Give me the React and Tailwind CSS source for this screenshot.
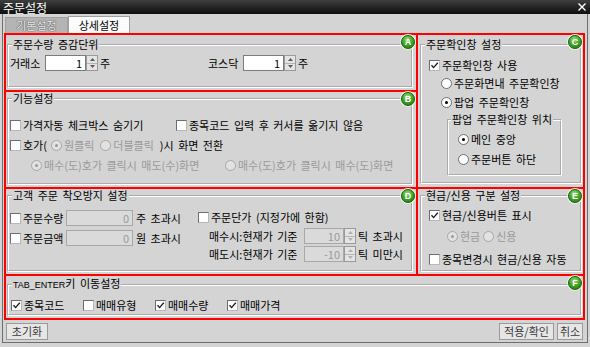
import React from "react";

function Badge({ letter }) {
  return (
    <span className="absolute right-[1px] top-0 z-10 flex h-[14px] w-[14px] items-center justify-center rounded-full border border-[#1f5e12] bg-[radial-gradient(circle_at_45%_30%,#9ee07a,#45a82a_45%,#20700f)] font-['Liberation_Sans',sans-serif] text-[9px] font-bold leading-none text-white shadow-[0_0_0_1px_#e8f3e0] [word-spacing:0]">
      {letter}
    </span>
  );
}

function Check({ checked }) {
  return (
    <span className="flex h-[11px] w-[11px] shrink-0 items-center justify-center border border-t-[#6e6e6e] border-l-[#6e6e6e] border-b-[#b8b8b8] border-r-[#b8b8b8] bg-white">
      {checked && (
        <svg viewBox="0 0 9 9" className="h-[9px] w-[9px]">
          <path d="M1.5 4.2L3.6 6.6L7.8 1.8" fill="none" stroke="#1a1a1a" strokeWidth="1.3" />
        </svg>
      )}
    </span>
  );
}

function Radio({ checked, disabled }) {
  return (
    <span
      className={`flex h-[11px] w-[11px] shrink-0 items-center justify-center rounded-full border ${
        disabled ? "border-[#a6a6a6] bg-[#e2e2e2]" : "border-[#6e6e6e] bg-white"
      }`}
    >
      {checked && (
        <span className={`h-[3px] w-[3px] rounded-full ${disabled ? "bg-[#9a9a9a]" : "bg-black"}`} />
      )}
    </span>
  );
}

function Spin({ disabled }) {
  const c = disabled ? "#b0b0b0" : "#5a5a5a";
  return (
    <span className="flex h-[16px] w-[12px] shrink-0 flex-col border border-[#9a9a9a] bg-[#e4e4e4]">
      <span className="flex flex-1 items-center justify-center border-b border-[#b4b4b4]">
        <svg width="5" height="3" viewBox="0 0 5 3">
          <path d="M0 3L2.5 0L5 3Z" fill={c} />
        </svg>
      </span>
      <span className="flex flex-1 items-center justify-center">
        <svg width="5" height="3" viewBox="0 0 5 3">
          <path d="M0 0L2.5 3L5 0Z" fill={c} />
        </svg>
      </span>
    </span>
  );
}

function NumBox({ value, width, disabled }) {
  return (
    <span
      className={`flex h-[16px] shrink-0 items-center justify-end border pr-[3px] ${width} ${
        disabled ? "border-[#a8a8a8] bg-[#dadada] text-[#9a9a9a]" : "border-[#7c7c7c] bg-white text-black"
      }`}
    >
      {value}
    </span>
  );
}

const groove = "border-2 border-white [border-style:groove]";

function Legend({ children }) {
  return <legend className="ml-[3px] px-[1px] leading-[13px]">{children}</legend>;
}

function Btn({ children, width }) {
  return (
    <button
      type="button"
      className={`flex h-[17px] items-center justify-center border border-[#9a9a9a] bg-[#e6e6e6] text-[#3a3a3a] ${width}`}
    >
      {children}
    </button>
  );
}

export default function App() {
  return (
    <div className="h-[347px] w-[590px] overflow-hidden bg-[#d4d4d4] font-['Noto_Sans_CJK_KR',sans-serif] text-[11px] leading-[13px] text-black [word-spacing:2px]">
      <div className="flex h-[14px] items-center justify-between bg-[linear-gradient(#3e3e3e,#0e0e0e)] pl-[3px] pr-[4px] text-white">
        <span className="text-[12px]">주문설정</span>
        <svg width="8" height="8" viewBox="0 0 8 8">
          <path d="M0.5 0.5L7.5 7.5M7.5 0.5L0.5 7.5" stroke="#fff" strokeWidth="1.4" />
        </svg>
      </div>

      <div className="mx-[2px] h-[329px] border border-t-0 border-[#6e6e6e]">
        <div className="flex h-[19px] items-end pl-[2px]">
          <div className="flex h-[16px] w-[63px] items-center justify-center border border-b-0 border-[#a0a0a0] bg-[#b4b4b4] text-[#f2f2f2] [text-shadow:0_0_1px_#3c3c3c,0_0_1px_#3c3c3c]">
            기본설정
          </div>
          <div className="flex h-[17px] w-[62px] items-center justify-center border border-b-0 border-[#a0a0a0] bg-[#fbfbfb]">
            상세설정
          </div>
        </div>

        <div className="ml-[1px] flex h-[287px] w-[581px] flex-col border-2 border-[#ff0000]">
          <div className="flex h-[241px] border-b-2 border-[#ff0000]">
            <div className="flex w-[412px] flex-col border-r-2 border-[#ff0000]">
              {/* A */}
              <div className="relative h-[57px] border-b-2 border-[#ff0000]">
                <Badge letter="A" />
                <fieldset className={`ml-[1px] mr-[3px] mt-[3px] h-[50px] ${groove}`}>
                  <Legend>주문수량 증감단위</Legend>
                  <div className="mt-[4px] flex items-center pl-[1px]">
                    <div className="flex w-[198px] items-center">
                      <span className="w-[35px]">거래소</span>
                      <NumBox value="1" width="w-[41px]" />
                      <Spin />
                      <span className="ml-[2px]">주</span>
                    </div>
                    <div className="flex items-center">
                      <span className="w-[35px]">코스닥</span>
                      <NumBox value="1" width="w-[41px]" />
                      <Spin />
                      <span className="ml-[2px]">주</span>
                    </div>
                  </div>
                </fieldset>
              </div>

              {/* B */}
              <div className="relative h-[97px] border-b-2 border-[#ff0000]">
                <Badge letter="B" />
                <fieldset className={`ml-[1px] mr-[3px] h-[93px] ${groove}`}>
                  <Legend>기능설정</Legend>
                  <div className="mt-[10px] flex flex-col pl-[1px]">
                    <div className="flex h-[20px] items-center">
                      <label className="flex w-[166px] items-center gap-[2px]">
                        <Check />
                        <span>가격자동 체크박스 숨기기</span>
                      </label>
                      <label className="flex items-center gap-[2px]">
                        <Check />
                        <span>종목코드 입력 후 커서를 옮기지 않음</span>
                      </label>
                    </div>
                    <div className="flex h-[20px] items-center">
                      <Check />
                      <span className="ml-[2px]">호가(</span>
                      <span className="ml-[4px]">
                        <Radio checked disabled />
                      </span>
                      <span className="ml-[2px] text-[#9a9a9a]">원클릭</span>
                      <span className="ml-[6px]">
                        <Radio disabled />
                      </span>
                      <span className="ml-[2px] text-[#9a9a9a]">더블클릭</span>
                      <span className="ml-[6px]">)시 화면 전환</span>
                    </div>
                    <div className="flex h-[20px] items-center pl-[21px] text-[#9a9a9a]">
                      <label className="flex w-[194px] items-center gap-[2px]">
                        <Radio checked disabled />
                        <span>매수(도)호가 클릭시 매도(수)화면</span>
                      </label>
                      <label className="flex items-center gap-[2px]">
                        <Radio disabled />
                        <span>매수(도)호가 클릭시 매수(도)화면</span>
                      </label>
                    </div>
                  </div>
                </fieldset>
              </div>

              {/* D */}
              <div className="relative h-[85px]">
                <Badge letter="D" />
                <fieldset className={`ml-[1px] mr-[3px] h-[83px] ${groove}`}>
                  <Legend>고객 주문 착오방지 설정</Legend>
                  <div className="flex items-start">
                    <div className="mt-[6px] flex w-[189px] flex-col pl-[1px]">
                      <div className="flex h-[20px] items-center">
                        <Check />
                        <span className="ml-[2px] w-[43px]">주문수량</span>
                        <NumBox value="0" width="w-[67px]" disabled />
                        <span className="ml-[3px]">주 초과시</span>
                      </div>
                      <div className="flex h-[20px] items-center">
                        <Check />
                        <span className="ml-[2px] w-[43px]">주문금액</span>
                        <NumBox value="0" width="w-[67px]" disabled />
                        <span className="ml-[3px]">원 초과시</span>
                      </div>
                    </div>
                    <div className="mt-[6px] flex flex-col">
                      <div className="flex h-[19px] items-center gap-[2px]">
                        <Check />
                        <span>주문단가 (지정가에 한함)</span>
                      </div>
                      <div className="flex h-[18px] items-center pl-[11px]">
                        <span className="w-[95px]">매수시:현재가 기준</span>
                        <NumBox value="10" width="w-[40px]" disabled />
                        <Spin disabled />
                        <span className="ml-[2px]">틱 초과시</span>
                      </div>
                      <div className="flex h-[18px] items-center pl-[11px]">
                        <span className="w-[95px]">매도시:현재가 기준</span>
                        <NumBox value="-10" width="w-[40px]" disabled />
                        <Spin disabled />
                        <span className="ml-[2px]">틱 미만시</span>
                      </div>
                    </div>
                  </div>
                </fieldset>
              </div>
            </div>

            <div className="flex flex-1 flex-col">
              {/* C */}
              <div className="relative h-[154px] border-b-2 border-[#ff0000]">
                <Badge letter="C" />
                <fieldset className={`ml-[2px] mr-[1px] mt-[3px] h-[146px] ${groove}`}>
                  <Legend>주문확인창 설정</Legend>
                  <div className="mt-[5px] flex flex-col pl-[7px]">
                    <label className="flex h-[18px] items-center gap-[2px]">
                      <Check checked />
                      <span>주문확인창 사용</span>
                    </label>
                    <label className="flex h-[18px] items-center gap-[2px] pl-[12px]">
                      <Radio />
                      <span>주문화면내 주문확인창</span>
                    </label>
                    <label className="flex h-[20px] items-center gap-[2px] pl-[12px]">
                      <Radio checked />
                      <span>팝업 주문확인창</span>
                    </label>
                  </div>
                  <fieldset className={`ml-[25px] mt-[1px] h-[63px] w-[115px] ${groove}`}>
                    <legend className="ml-[2px] px-[1px] leading-[13px]">팝업 주문확인창 위치</legend>
                    <div className="mt-[3px] flex flex-col pl-[9px]">
                      <label className="flex h-[20px] items-center gap-[2px]">
                        <Radio checked />
                        <span>메인 중앙</span>
                      </label>
                      <label className="flex h-[20px] items-center gap-[2px]">
                        <Radio />
                        <span>주문버튼 하단</span>
                      </label>
                    </div>
                  </fieldset>
                </fieldset>
              </div>

              {/* E */}
              <div className="relative h-[85px]">
                <Badge letter="E" />
                <fieldset className={`ml-[2px] mr-[1px] h-[83px] ${groove}`}>
                  <Legend>현금/신용 구분 설정</Legend>
                  <div className="mt-[3px] flex flex-col pl-[7px]">
                    <label className="flex h-[20px] items-center gap-[2px]">
                      <Check checked />
                      <span>현금/신용버튼 표시</span>
                    </label>
                    <div className="flex h-[22px] items-center pl-[18px] text-[#9a9a9a]">
                      <Radio checked disabled />
                      <span className="ml-[2px]">현금</span>
                      <span className="ml-[3px]">
                        <Radio disabled />
                      </span>
                      <span className="ml-[2px]">신용</span>
                    </div>
                    <label className="flex h-[24px] items-center gap-[2px]">
                      <Check />
                      <span>종목변경시 현금/신용 자동</span>
                    </label>
                  </div>
                </fieldset>
              </div>
            </div>
          </div>

          {/* F */}
          <div className="relative flex-1">
            <Badge letter="F" />
            <fieldset className={`ml-[1px] mr-[1px] mt-[1px] h-[39px] ${groove}`}>
              <Legend>
                <span className="font-['Liberation_Sans',sans-serif] text-[9px]">TAB_ENTER</span>키 이동설정
              </Legend>
              <div className="mt-[4px] flex h-[18px] items-center pl-[2px]">
                {[
                  ["종목코드", true],
                  ["매매유형", false],
                  ["매매수량", true],
                  ["매매가격", true],
                ].map(([label, on]) => (
                  <label key={label} className="flex w-[72px] items-center gap-[2px]">
                    <Check checked={on} />
                    <span>{label}</span>
                  </label>
                ))}
              </div>
            </fieldset>
          </div>
        </div>

        <div className="mt-[3px] flex items-center justify-between pl-[3px] pr-[4px]">
          <Btn width="w-[42px]">초기화</Btn>
          <div className="flex gap-[3px]">
            <Btn width="w-[55px]">적용/확인</Btn>
            <Btn width="w-[26px]">취소</Btn>
          </div>
        </div>
      </div>
    </div>
  );
}
